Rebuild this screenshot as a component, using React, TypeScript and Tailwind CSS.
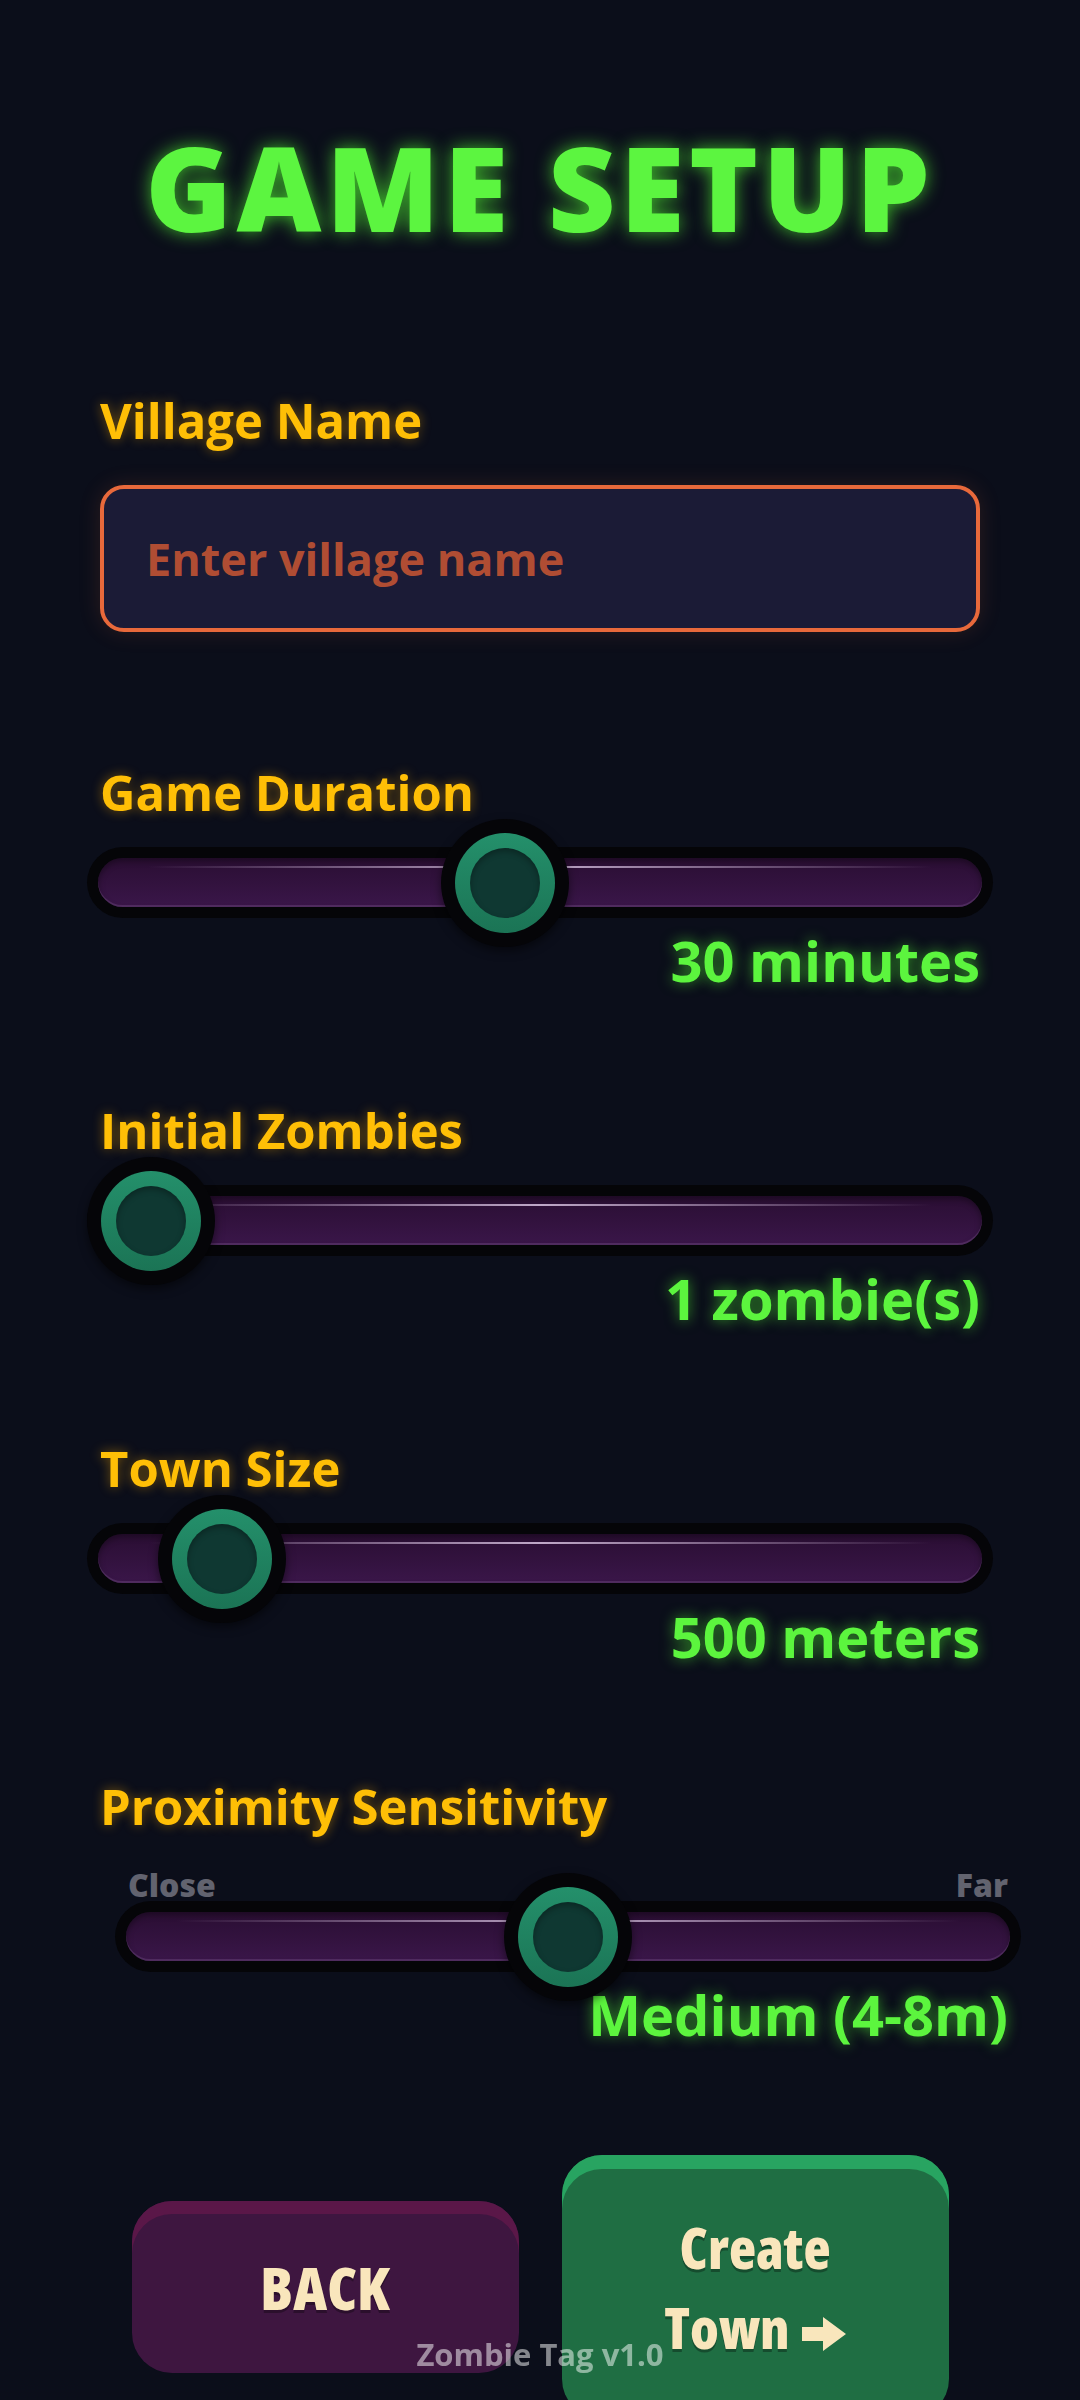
import { useState } from 'react';

const sans = { fontFamily: '"Open Sans", Lato, sans-serif' };
const narrow = { fontFamily: '"Open Sans", Lato, sans-serif', fontStretch: '75%' };

type SliderProps = {
    pct: number;
};

function Slider({ pct }: SliderProps) {
    return (
        <div className="relative h-[71px] rounded-full bg-[#050508] p-[11px]">
            <div className="relative h-full rounded-full bg-gradient-to-b from-[#2a0e33] to-[#3a1649] shadow-[inset_0_-2px_0_rgba(150,110,170,0.25),inset_0_3px_6px_rgba(0,0,0,0.35)]">
                <div className="absolute left-[50px] right-[50px] top-[8px] h-[2px] bg-gradient-to-r from-transparent via-[#bfa8c8] to-transparent" />
            </div>
            <div
                className="absolute top-1/2 flex h-[128px] w-[128px] -translate-y-1/2 items-center justify-center rounded-full bg-[#050508] shadow-[0_4px_10px_rgba(0,0,0,0.5)]"
                style={{ left: `calc(${pct} * (100% - 128px))` }}
            >
                <div className="flex h-[100px] w-[100px] items-center justify-center rounded-full bg-gradient-to-b from-[#24906b] to-[#1b7455]">
                    <div className="h-[70px] w-[70px] rounded-full bg-[#0f3832] shadow-[inset_0_3px_6px_rgba(0,0,0,0.3)]" />
                </div>
            </div>
        </div>
    );
}

function Label({ children, className = '' }: { children: React.ReactNode; className?: string }) {
    return (
        <h2
            className={`text-[49px] font-bold leading-none text-[#ffbf06] [text-shadow:0_0_12px_rgba(255,176,0,0.45)] ${className}`}
            style={sans}
        >
            {children}
        </h2>
    );
}

function Value({ children }: { children: React.ReactNode }) {
    return (
        <p
            className="mt-[14px] text-right text-[56px] font-bold leading-none text-[#5cf53e] [text-shadow:0_0_14px_rgba(80,240,50,0.6)]"
            style={sans}
        >
            {children}
        </p>
    );
}

// heavy arrow used on the create button
function ArrowRight() {
    return (
        <svg width="44" height="34" viewBox="0 0 44 34" className="ml-[12px] inline-block align-[-2px]" fill="currentColor">
            <path d="M0 10 H21 V0 L44 17 L21 34 V24 H0 Z" />
        </svg>
    );
}

const settings = [
    { label: 'Game Duration', value: '30 minutes', pct: 0.4545 },
    { label: 'Initial Zombies', value: '1 zombie(s)', pct: 0 },
    { label: 'Town Size', value: '500 meters', pct: 0.091 },
];

export default function App() {
    const [village, setVillage] = useState('');

    return (
        <div className="min-h-screen bg-[#0b0e1a] px-[100px] pb-[60px] pt-[128px]">
            <h1
                className="text-center text-[117px] font-extrabold leading-none tracking-[0.04em] text-[#5cf540] [text-shadow:0_0_18px_rgba(80,240,50,0.75)]"
                style={sans}
            >
                GAME SETUP
            </h1>

            <Label className="mt-[151px]">Village Name</Label>
            <input
                type="text"
                value={village}
                onChange={(e) => setVillage(e.target.value)}
                placeholder="Enter village name"
                className="mt-[40px] h-[147px] w-full rounded-[24px] border-[4px] border-[#e8693b] bg-[#1b1b36] pl-[42px] text-[45px] font-bold text-[#f2e2c0] shadow-[0_0_22px_rgba(232,105,59,0.15)] outline-none placeholder:text-[#b04d33]"
                style={sans}
            />

            <div className="mt-[136px] flex flex-col gap-[118px]">
                {settings.map((s) => (
                    <section key={s.label}>
                        <Label>{s.label}</Label>
                        <div className="mx-[-13px] mt-[30px]">
                            <Slider pct={s.pct} />
                        </div>
                        <Value>{s.value}</Value>
                    </section>
                ))}

                <section>
                    <Label>Proximity Sensitivity</Label>
                    <div className="ml-[28px] mr-[-28px]">
                        <div
                            className="mt-[38px] flex justify-between text-[32px] font-extrabold leading-none text-[#62636f]"
                            style={sans}
                        >
                            <span>Close</span>
                            <span>Far</span>
                        </div>
                        <div className="mx-[-13px]">
                            <Slider pct={0.5} />
                        </div>
                        <Value>Medium (4-8m)</Value>
                    </div>
                </section>
            </div>

            <div className="mt-[113px] flex items-center justify-center gap-[43px]">
                <button
                    type="button"
                    className="h-[172px] w-[387px] rounded-[40px] bg-[#3e1640] text-[59px] font-extrabold leading-[80px] text-[#f9e6bc] shadow-[inset_0_13px_0_#5a1748] [text-shadow:0_3px_0_rgba(0,0,0,0.3)]"
                    style={narrow}
                >
                    BACK
                </button>
                <button
                    type="button"
                    className="w-[387px] rounded-[40px] bg-[#1f6e43] py-[52px] text-[56px] font-extrabold leading-[80px] text-[#f9e6bc] shadow-[inset_0_14px_0_#28a461] [text-shadow:0_3px_0_rgba(0,0,0,0.3)]"
                    style={narrow}
                >
                    Create
                    <br />
                    Town
                    <ArrowRight />
                </button>
            </div>

            <p
                className="pointer-events-none fixed inset-x-0 bottom-[30px] text-center text-[31px] font-bold leading-none text-white/50"
                style={sans}
            >
                Zombie Tag v1.0
            </p>
        </div>
    );
}
